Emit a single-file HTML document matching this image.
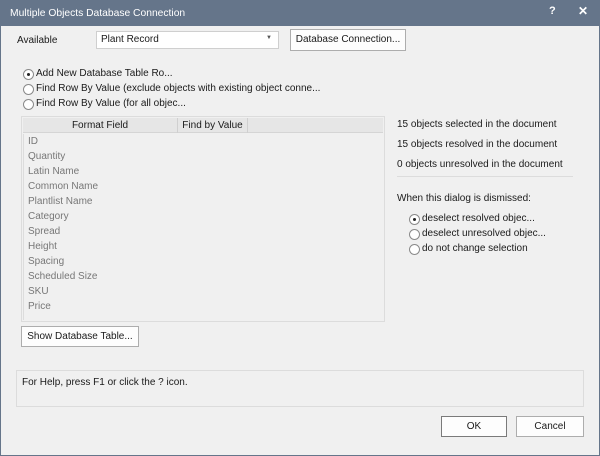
<!DOCTYPE html>
<html><head><style>
*{box-sizing:border-box;margin:0;padding:0}
body{width:600px;height:456px;overflow:hidden;background:#65758a;font-family:"Liberation Sans",sans-serif;font-size:10px;color:#1a1a1a;position:relative}
.t{position:absolute;left:10px;top:8px;color:#fff;font-size:10.3px}
.win{position:absolute;left:1px;top:26px;width:598px;height:429px;background:#f0f0f0}
.a{position:absolute;white-space:nowrap}
.btn{position:absolute;background:#fdfdfd;border:1px solid #adadad;text-align:center;line-height:19px;white-space:nowrap}
.r{position:absolute;width:11px;height:11px;border:1px solid #8a8a8a;border-radius:50%;background:#fff}
.r.on::after{content:"";position:absolute;left:3px;top:3px;width:3px;height:3px;border-radius:50%;background:#222}
.li{position:absolute;left:27px;color:#777}
</style></head><body>
<div class="t">Multiple Objects Database Connection</div>
<div class="a" style="left:549px;top:5px;color:#fff;font-weight:bold;font-size:11px">?</div>
<div class="a" style="left:578px;top:4px;color:#fff;font-weight:bold;font-size:12px">✕</div>
<div class="win">
<div class="a" style="left:16px;top:9px">Available</div>
<div class="a" style="left:95px;top:5px;width:183px;height:18px;background:#fff;border:1px solid #cfcfcf;padding:2px 4px">Plant Record<span style="position:absolute;right:6px;top:3px;font-size:6px;color:#555">▼</span></div>
<div class="btn" style="left:289px;top:3px;width:116px;height:22px">Database Connection...</div>
<div class="r on" style="left:22px;top:43px"></div><div class="a" style="left:35px;top:42px">Add New Database Table Ro...</div>
<div class="r" style="left:22px;top:58px"></div><div class="a" style="left:35px;top:57px">Find Row By Value (exclude objects with existing object conne...</div>
<div class="r" style="left:22px;top:73px"></div><div class="a" style="left:35px;top:72px">Find Row By Value (for all objec...</div>
<div class="a" style="left:20px;top:90px;width:364px;height:206px;border:1px solid #dcdcdc;background:#f0f0f0">
 <div style="position:absolute;left:1px;top:1px;right:1px;height:15px;background:#e6e6e6;border-bottom:1px solid #d5d5d5"></div>
 <div class="a" style="left:1px;top:1px;width:155px;height:15px;border-right:1px solid #d0d0d0;text-align:center;line-height:15px">Format Field</div>
 <div class="a" style="left:156px;top:1px;width:70px;height:15px;border-right:1px solid #d0d0d0;text-align:center;line-height:15px">Find by Value</div>
 <div style="position:absolute;left:1px;top:17px;width:1px;bottom:1px;background:#dcdcdc"></div>
</div>
<div class="li" style="top:110px">ID</div>
<div class="li" style="top:125px">Quantity</div>
<div class="li" style="top:140px">Latin Name</div>
<div class="li" style="top:155px">Common Name</div>
<div class="li" style="top:170px">Plantlist Name</div>
<div class="li" style="top:185px">Category</div>
<div class="li" style="top:200px">Spread</div>
<div class="li" style="top:215px">Height</div>
<div class="li" style="top:230px">Spacing</div>
<div class="li" style="top:245px">Scheduled Size</div>
<div class="li" style="top:260px">SKU</div>
<div class="li" style="top:275px">Price</div>
<div class="a" style="left:396px;top:93px">15 objects selected in the document</div>
<div class="a" style="left:396px;top:113px">15 objects resolved in the document</div>
<div class="a" style="left:396px;top:133px">0 objects unresolved in the document</div>
<div class="a" style="left:396px;top:150px;width:176px;height:1px;background:#dcdcdc"></div>
<div class="a" style="left:396px;top:167px">When this dialog is dismissed:</div>
<div class="r on" style="left:408px;top:188px"></div><div class="a" style="left:421px;top:187px">deselect resolved objec...</div>
<div class="r" style="left:408px;top:203px"></div><div class="a" style="left:421px;top:202px">deselect unresolved objec...</div>
<div class="r" style="left:408px;top:218px"></div><div class="a" style="left:421px;top:217px">do not change selection</div>
<div class="btn" style="left:20px;top:300px;width:118px;height:21px">Show Database Table...</div>
<div class="a" style="left:15px;top:344px;width:568px;height:37px;border:1px solid #dcdcdc;padding:6px 5px">For Help, press F1 or click the ? icon.</div>
<div class="btn" style="left:440px;top:390px;width:66px;height:21px;border-color:#7a7a7a">OK</div>
<div class="btn" style="left:515px;top:390px;width:68px;height:21px">Cancel</div>
</div>
</body></html>
